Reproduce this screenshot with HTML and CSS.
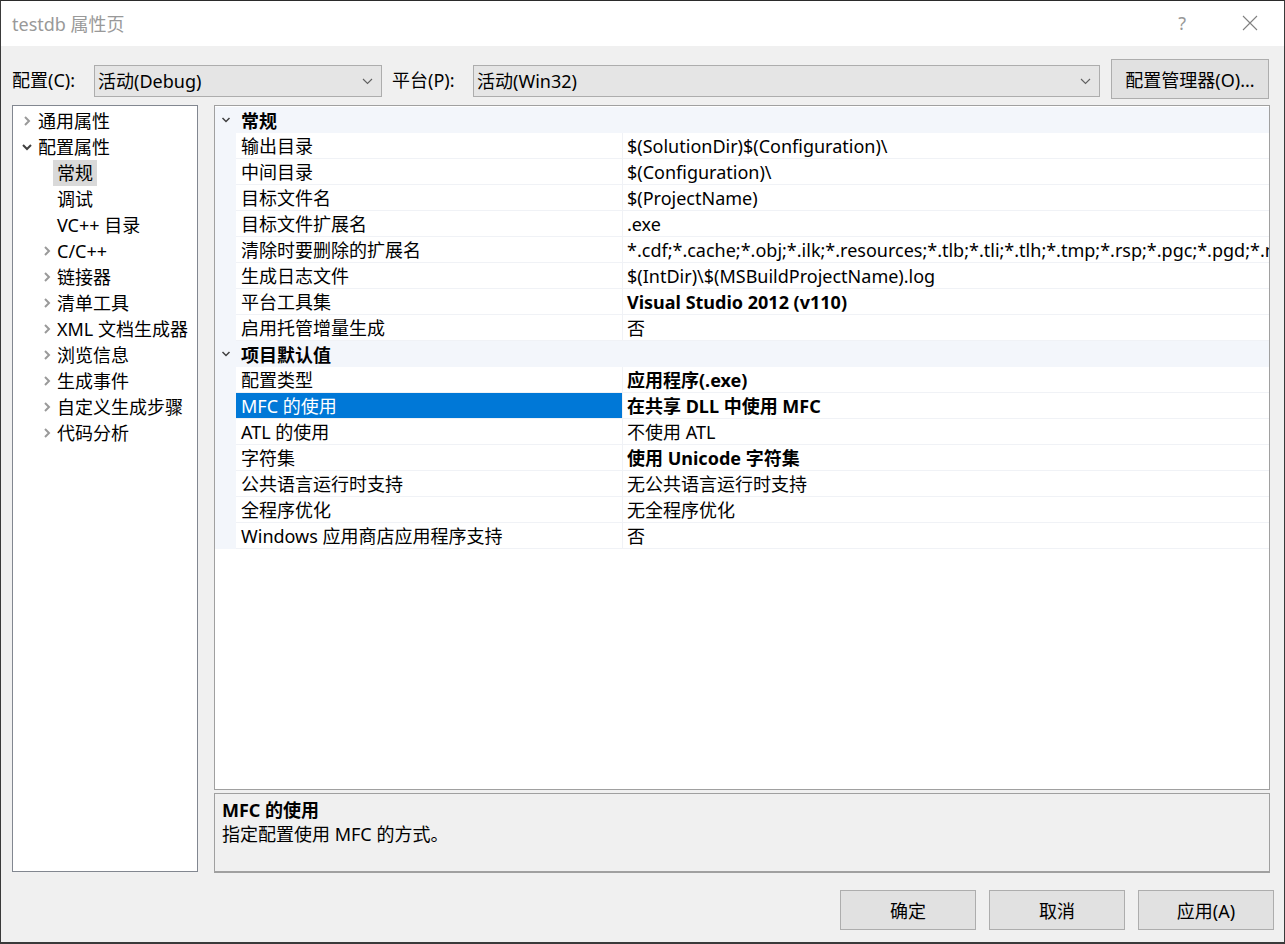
FILE: index.html
```html
<!DOCTYPE html>
<html>
<head>
<meta charset="utf-8">
<link rel="stylesheet" href="styles.css">
</head>
<body>
<div class="window">
  <div class="titlebar">
    <span class="title">testdb 属性页</span>
    <span class="help">?</span>
    <svg class="close" width="16" height="16" viewBox="0 0 16 16"><path d="M1 1L15 15M15 1L1 15" stroke="#808080" stroke-width="1.1" fill="none"/></svg>
  </div>
  <div class="content">
    <div class="toprow">
      <span class="lbl lbl1">配置(C):</span>
      <div class="combo combo1"><span>活动(Debug)</span><svg width="11" height="7" viewBox="0 0 11 7"><path d="M1 1L5.5 5.5L10 1" stroke="#606060" stroke-width="1.1" fill="none"/></svg></div>
      <span class="lbl lbl2">平台(P):</span>
      <div class="combo combo2"><span>活动(Win32)</span><svg width="11" height="7" viewBox="0 0 11 7"><path d="M1 1L5.5 5.5L10 1" stroke="#606060" stroke-width="1.1" fill="none"/></svg></div>
      <div class="btn mgr">配置管理器(O)...</div>
    </div>
    <div class="main">
      <div class="tree">
        <div class="node top"><svg class="chev" width="10" height="12" viewBox="0 0 10 12"><path d="M3 2L7 6L3 10" stroke="#9a9a9a" stroke-width="2" fill="none"/></svg><span>通用属性</span></div>
        <div class="node top"><svg class="chev" width="12" height="10" viewBox="0 0 12 10"><path d="M2 3L6 7L10 3" stroke="#404040" stroke-width="2" fill="none"/></svg><span>配置属性</span></div>
        <div class="node child"><span class="sel">常规</span></div>
        <div class="node child"><span>调试</span></div>
        <div class="node child"><span>VC++ 目录</span></div>
        <div class="node sub"><svg class="chev" width="10" height="12" viewBox="0 0 10 12"><path d="M3 2L7 6L3 10" stroke="#9a9a9a" stroke-width="2" fill="none"/></svg><span>C/C++</span></div>
        <div class="node sub"><svg class="chev" width="10" height="12" viewBox="0 0 10 12"><path d="M3 2L7 6L3 10" stroke="#9a9a9a" stroke-width="2" fill="none"/></svg><span>链接器</span></div>
        <div class="node sub"><svg class="chev" width="10" height="12" viewBox="0 0 10 12"><path d="M3 2L7 6L3 10" stroke="#9a9a9a" stroke-width="2" fill="none"/></svg><span>清单工具</span></div>
        <div class="node sub"><svg class="chev" width="10" height="12" viewBox="0 0 10 12"><path d="M3 2L7 6L3 10" stroke="#9a9a9a" stroke-width="2" fill="none"/></svg><span>XML 文档生成器</span></div>
        <div class="node sub"><svg class="chev" width="10" height="12" viewBox="0 0 10 12"><path d="M3 2L7 6L3 10" stroke="#9a9a9a" stroke-width="2" fill="none"/></svg><span>浏览信息</span></div>
        <div class="node sub"><svg class="chev" width="10" height="12" viewBox="0 0 10 12"><path d="M3 2L7 6L3 10" stroke="#9a9a9a" stroke-width="2" fill="none"/></svg><span>生成事件</span></div>
        <div class="node sub"><svg class="chev" width="10" height="12" viewBox="0 0 10 12"><path d="M3 2L7 6L3 10" stroke="#9a9a9a" stroke-width="2" fill="none"/></svg><span>自定义生成步骤</span></div>
        <div class="node sub"><svg class="chev" width="10" height="12" viewBox="0 0 10 12"><path d="M3 2L7 6L3 10" stroke="#9a9a9a" stroke-width="2" fill="none"/></svg><span>代码分析</span></div>
      </div>
      <div class="right">
        <div class="grid">
          <div class="row head"><div class="gut"><svg width="10" height="8" viewBox="0 0 10 8"><path d="M1.5 2L5 5.5L8.5 2" stroke="#404040" stroke-width="1.5" fill="none"/></svg></div><div class="htext">常规</div></div>
          <div class="row"><div class="gut"></div><div class="name">输出目录</div><div class="val">$(SolutionDir)$(Configuration)\</div></div>
          <div class="row"><div class="gut"></div><div class="name">中间目录</div><div class="val">$(Configuration)\</div></div>
          <div class="row"><div class="gut"></div><div class="name">目标文件名</div><div class="val">$(ProjectName)</div></div>
          <div class="row"><div class="gut"></div><div class="name">目标文件扩展名</div><div class="val">.exe</div></div>
          <div class="row"><div class="gut"></div><div class="name">清除时要删除的扩展名</div><div class="val">*.cdf;*.cache;*.obj;*.ilk;*.resources;*.tlb;*.tli;*.tlh;*.tmp;*.rsp;*.pgc;*.pgd;*.meta;*.tlog;*.manifest;*.res;*.pch;*.exp;*.idb;*.rep;*.xdc;*.pdb;*_manifest.rc;*.bsc;*.sbr;*.xml;*.metagen;*.bi</div></div>
          <div class="row"><div class="gut"></div><div class="name">生成日志文件</div><div class="val">$(IntDir)\$(MSBuildProjectName).log</div></div>
          <div class="row"><div class="gut"></div><div class="name">平台工具集</div><div class="val b">Visual Studio 2012 (v110)</div></div>
          <div class="row"><div class="gut"></div><div class="name">启用托管增量生成</div><div class="val">否</div></div>
          <div class="row head"><div class="gut"><svg width="10" height="8" viewBox="0 0 10 8"><path d="M1.5 2L5 5.5L8.5 2" stroke="#404040" stroke-width="1.5" fill="none"/></svg></div><div class="htext">项目默认值</div></div>
          <div class="row"><div class="gut"></div><div class="name">配置类型</div><div class="val b">应用程序(.exe)</div></div>
          <div class="row"><div class="gut"></div><div class="name selected">MFC 的使用</div><div class="val b">在共享 DLL 中使用 MFC</div></div>
          <div class="row"><div class="gut"></div><div class="name">ATL 的使用</div><div class="val">不使用 ATL</div></div>
          <div class="row"><div class="gut"></div><div class="name">字符集</div><div class="val b">使用 Unicode 字符集</div></div>
          <div class="row"><div class="gut"></div><div class="name">公共语言运行时支持</div><div class="val">无公共语言运行时支持</div></div>
          <div class="row"><div class="gut"></div><div class="name">全程序优化</div><div class="val">无全程序优化</div></div>
          <div class="row"><div class="gut"></div><div class="name">Windows 应用商店应用程序支持</div><div class="val">否</div></div>
        </div>
        <div class="desc">
          <div class="dtitle">MFC 的使用</div>
          <div class="dtext">指定配置使用 MFC 的方式。</div>
        </div>
      </div>
    </div>
    <div class="buttons">
      <div class="btn dbtn">确定</div>
      <div class="btn dbtn">取消</div>
      <div class="btn dbtn">应用(A)</div>
    </div>
  </div>
</div>
</body>
</html>
```
FILE: styles.css
```css
* { box-sizing: border-box; }
html, body { margin: 0; padding: 0; }
body {
  font-family: "Noto Sans", "Noto Sans CJK SC", sans-serif;
  font-size: 18px;
  color: #000;
  background: #f0f0f0;
}
.window {
  width: 1285px;
  height: 944px;
  border-top: 1px solid #2b2b2b;
  border-left: 1px solid #3a3a3a;
  border-right: 1px solid #3a3a3a;
  border-bottom: 2px solid #3a3a3a;
  background: #f0f0f0;
  display: flex;
  flex-direction: column;
  overflow: hidden;
}
.titlebar {
  height: 45px;
  background: #fff;
  display: flex;
  align-items: center;
  padding-left: 11px;
  flex-shrink: 0;
}
.title {
  color: #999;
  font-size: 18px;
  flex: 1;
  margin-top: -2px;
}
.help {
  color: #999;
  font-size: 18px;
  margin-right: 56px;
  margin-top: -2px;
}
.close { margin-right: 26px; margin-top: -2px; }
.content {
  flex: 1;
  padding: 13px 0 0 11px;
  display: flex;
  flex-direction: column;
}
.toprow {
  display: flex;
  align-items: flex-start;
  height: 40px;
}
.lbl {
  height: 32px;
  margin-top: 6px;
  line-height: 30px;
}
.lbl1 { width: 82px; }
.lbl2 { width: 81px; margin-left: 10px; }
.combo {
  height: 32px;
  margin-top: 6px;
  background: #e5e5e5;
  border: 1px solid #adadad;
  display: flex;
  align-items: center;
  justify-content: space-between;
  padding: 0 8px 0 3px;
}
.combo span { line-height: 28px; }
.combo1 { width: 288px; }
.combo2 { width: 627px; }
.btn {
  background: #e1e1e1;
  border: 1px solid #adadad;
  display: flex;
  align-items: center;
  justify-content: center;
}
.mgr {
  width: 158px;
  height: 40px;
  margin-left: 11px;
}
.main {
  display: flex;
  gap: 16px;
  margin-top: 6px;
}
.tree {
  width: 186px;
  height: 767px;
  background: #fff;
  border: 1px solid #828790;
  padding-top: 2px;
}
.node {
  height: 26px;
  display: flex;
  align-items: center;
  white-space: nowrap;
  line-height: 26px;
}
.node.top { padding-left: 8px; }
.node.top .chev { width: 12px; margin-right: 5px; }
.node.child { padding-left: 40px; }
.node.child span { padding: 0 4px; line-height: 26px; }
.node.child span.sel { background: #d9d9d9; }
.node.sub { padding-left: 28px; }
.node.sub .chev { width: 12px; margin-right: 4px; }
.right {
  width: 1056px;
  display: flex;
  flex-direction: column;
  gap: 3px;
}
.grid {
  height: 685px;
  background: #fff;
  border: 1px solid #a0a0a0;
  padding-top: 1px;
  overflow: hidden;
}
.row {
  display: flex;
  height: 26px;
}
.gut {
  width: 21px;
  flex-shrink: 0;
  background: #f3f6fb;
  display: flex;
  align-items: center;
  justify-content: center;
}
.head { background: #f3f6fb; }
.htext {
  font-weight: bold;
  padding-left: 5px;
  padding-top: 1px;
  line-height: 26px;
}
.name {
  width: 387px;
  flex-shrink: 0;
  padding-left: 5px;
  padding-top: 1px;
  line-height: 25px;
  border-bottom: 1px solid #f0f2f6;
  border-right: 1px solid #f0f2f6;
  white-space: nowrap;
}
.name.selected { background: #0078d7; color: #fff; }
.val {
  flex: 1;
  padding-left: 4px;
  padding-top: 1px;
  line-height: 25px;
  border-bottom: 1px solid #f0f2f6;
  white-space: nowrap;
  overflow: hidden;
}
.b { font-weight: bold; }
.desc {
  height: 80px;
  border: 1px solid #a0a0a0;
  border-bottom: 2px solid #a0a0a0;
  background: #f0f0f0;
  padding: 4px 0 0 7px;
}
.dtitle { font-weight: bold; line-height: 24px; }
.dtext { line-height: 24px; }
.buttons {
  display: flex;
  justify-content: flex-end;
  gap: 13px;
  margin-top: 17px;
  padding-right: 10px;
}
.dbtn { width: 136px; height: 40px; }
```
